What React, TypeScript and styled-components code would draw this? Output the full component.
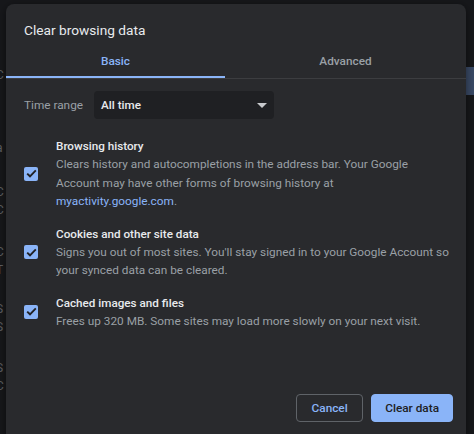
import React from "react";
import styled, { createGlobalStyle } from "styled-components";

const Global = createGlobalStyle`
  html, body { margin: 0; padding: 0; background: #141518; }
  body { font-family: Roboto, "Noto Sans", Arial, sans-serif; -webkit-font-smoothing: antialiased; }
  #root { width: 474px; height: 434px; overflow: hidden; }
`;

const Page = styled.div`
  position: relative;
  width: 474px;
  height: 434px;
  background: #17181b;
  overflow: hidden;
`;

const Behind = styled.div`
  position: absolute;
  left: -4px;
  top: 0;
  width: 12px;
  height: 434px;
  color: #5f6165;
  font-size: 12px;
  line-height: 18px;
`;

const BehindItem = styled.div<{ $top: number }>`
  position: absolute;
  top: ${(p) => p.$top}px;
`;

const SideBar = styled.div`
  position: absolute;
  right: 0;
  top: 67px;
  width: 8px;
  height: 28px;
  background: #3a4a66;
`;

const Dialog = styled.div`
  position: absolute;
  left: 6px;
  top: 4px;
  width: 460px;
  height: 440px;
  background: #292a2d;
  border-radius: 8px;
  box-shadow: 0 2px 10px rgba(0, 0, 0, 0.5);
  display: flex;
  flex-direction: column;
  color: #e8eaed;
`;

const Title = styled.div`
  padding: 16px 18px 0;
  font-size: 13.7px;
  line-height: 20px;
  color: #e8eaed;
`;

const Tabs = styled.div`
  margin-top: 4px;
  display: flex;
  border-bottom: 1px solid #3c3d40;
`;

const Tab = styled.div<{ $active?: boolean }>`
  height: 34px;
  display: flex;
  align-items: center;
  justify-content: center;
  font-size: 11.8px;
  font-weight: 500;
  color: ${(p) => (p.$active ? "#8ab4f8" : "#9aa0a6")};
  box-shadow: ${(p) => (p.$active ? "inset 0 -2px 0 #8ab4f8" : "none")};
  flex: ${(p) => (p.$active ? "0 0 219px" : "1")};
`;

const RangeRow = styled.div`
  display: flex;
  align-items: center;
  padding: 12px 0 0 18px;
  gap: 11px;
`;

const RangeLabel = styled.div`
  font-size: 11.8px;
  color: #9aa0a6;
`;

const Select = styled.div`
  width: 180px;
  height: 28px;
  background: #1f2023;
  border-radius: 4px;
  display: flex;
  align-items: center;
  justify-content: space-between;
  padding: 0 7px 0 7px;
  box-sizing: border-box;
  font-size: 11.7px;
  font-weight: 500;
  color: #e8eaed;
`;

const Arrow = styled.div`
  width: 0;
  height: 0;
  border-left: 5px solid transparent;
  border-right: 5px solid transparent;
  border-top: 5px solid #c8cacd;
`;

const Items = styled.div`
  display: flex;
  flex-direction: column;
  padding: 18px 18px 0 18px;
  gap: 14px;
`;

const Item = styled.div`
  display: flex;
  align-items: center;
  gap: 18px;
`;

const Box = styled.div`
  width: 14px;
  height: 14px;
  flex: 0 0 14px;
  border-radius: 2px;
  background: #8ab4f8;
  display: flex;
  align-items: center;
  justify-content: center;
`;

const ItemText = styled.div`
  display: flex;
  flex-direction: column;
  white-space: nowrap;
`;

const ItemTitle = styled.div`
  font-size: 11.7px;
  font-weight: 500;
  line-height: 18px;
  color: #e8eaed;
`;

const ItemDesc = styled.div`
  font-size: 11.8px;
  line-height: 18.5px;
  color: #9aa0a6;
`;

const Link = styled.span`
  color: #8ab4f8;
`;

const Footer = styled.div`
  margin-top: auto;
  margin-bottom: 22px;
  display: flex;
  justify-content: flex-end;
  gap: 8px;
  padding-right: 13px;
`;

const Button = styled.div<{ $primary?: boolean }>`
  height: 28px;
  box-sizing: border-box;
  padding: 0 ${(p) => (p.$primary ? "13px" : "14.5px")};
  border-radius: 4px;
  display: flex;
  align-items: center;
  font-size: 11.8px;
  font-weight: 500;
  color: ${(p) => (p.$primary ? "#202124" : "#8ab4f8")};
  background: ${(p) => (p.$primary ? "#8ab4f8" : "transparent")};
  border: 1px solid ${(p) => (p.$primary ? "#8ab4f8" : "#5f6368")};
`;

const Check = () => (
  <svg width="11" height="9" viewBox="0 0 11 9">
    <path d="M1.2 4.6 L4 7.3 L9.8 1.4" stroke="#202124" strokeWidth="1.9" fill="none" />
  </svg>
);

const items = [
  {
    title: "Browsing history",
    desc: (
      <>
        Clears history and autocompletions in the address bar. Your Google
        <br />
        Account may have other forms of browsing history at
        <br />
        <Link>myactivity.google.com</Link>.
      </>
    ),
  },
  {
    title: "Cookies and other site data",
    desc: (
      <>
        Signs you out of most sites. You'll stay signed in to your Google Account so
        <br />
        your synced data can be cleared.
      </>
    ),
  },
  {
    title: "Cached images and files",
    desc: <>Frees up 320 MB. Some sites may load more slowly on your next visit.</>,
  },
];

export default function App() {
  return (
    <Page>
      <Global />
      <Behind>
        <BehindItem $top={66}>C</BehindItem>
        <BehindItem $top={139}>a</BehindItem>
        <BehindItem $top={183}>C</BehindItem>
        <BehindItem $top={201}>C</BehindItem>
        <BehindItem $top={243}>C</BehindItem>
        <BehindItem $top={261}>T</BehindItem>
        <BehindItem $top={300}>S</BehindItem>
        <BehindItem $top={318}>S</BehindItem>
        <BehindItem $top={359}>S</BehindItem>
        <BehindItem $top={377}>C</BehindItem>
      </Behind>
      <SideBar />
      <Dialog>
        <Title>Clear browsing data</Title>
        <Tabs>
          <Tab $active>Basic</Tab>
          <Tab>Advanced</Tab>
        </Tabs>
        <RangeRow>
          <RangeLabel>Time range</RangeLabel>
          <Select>
            All time
            <Arrow />
          </Select>
        </RangeRow>
        <Items>
          {items.map((it) => (
            <Item key={it.title}>
              <Box>
                <Check />
              </Box>
              <ItemText>
                <ItemTitle>{it.title}</ItemTitle>
                <ItemDesc>{it.desc}</ItemDesc>
              </ItemText>
            </Item>
          ))}
        </Items>
        <Footer>
          <Button>Cancel</Button>
          <Button $primary>Clear data</Button>
        </Footer>
      </Dialog>
    </Page>
  );
}
